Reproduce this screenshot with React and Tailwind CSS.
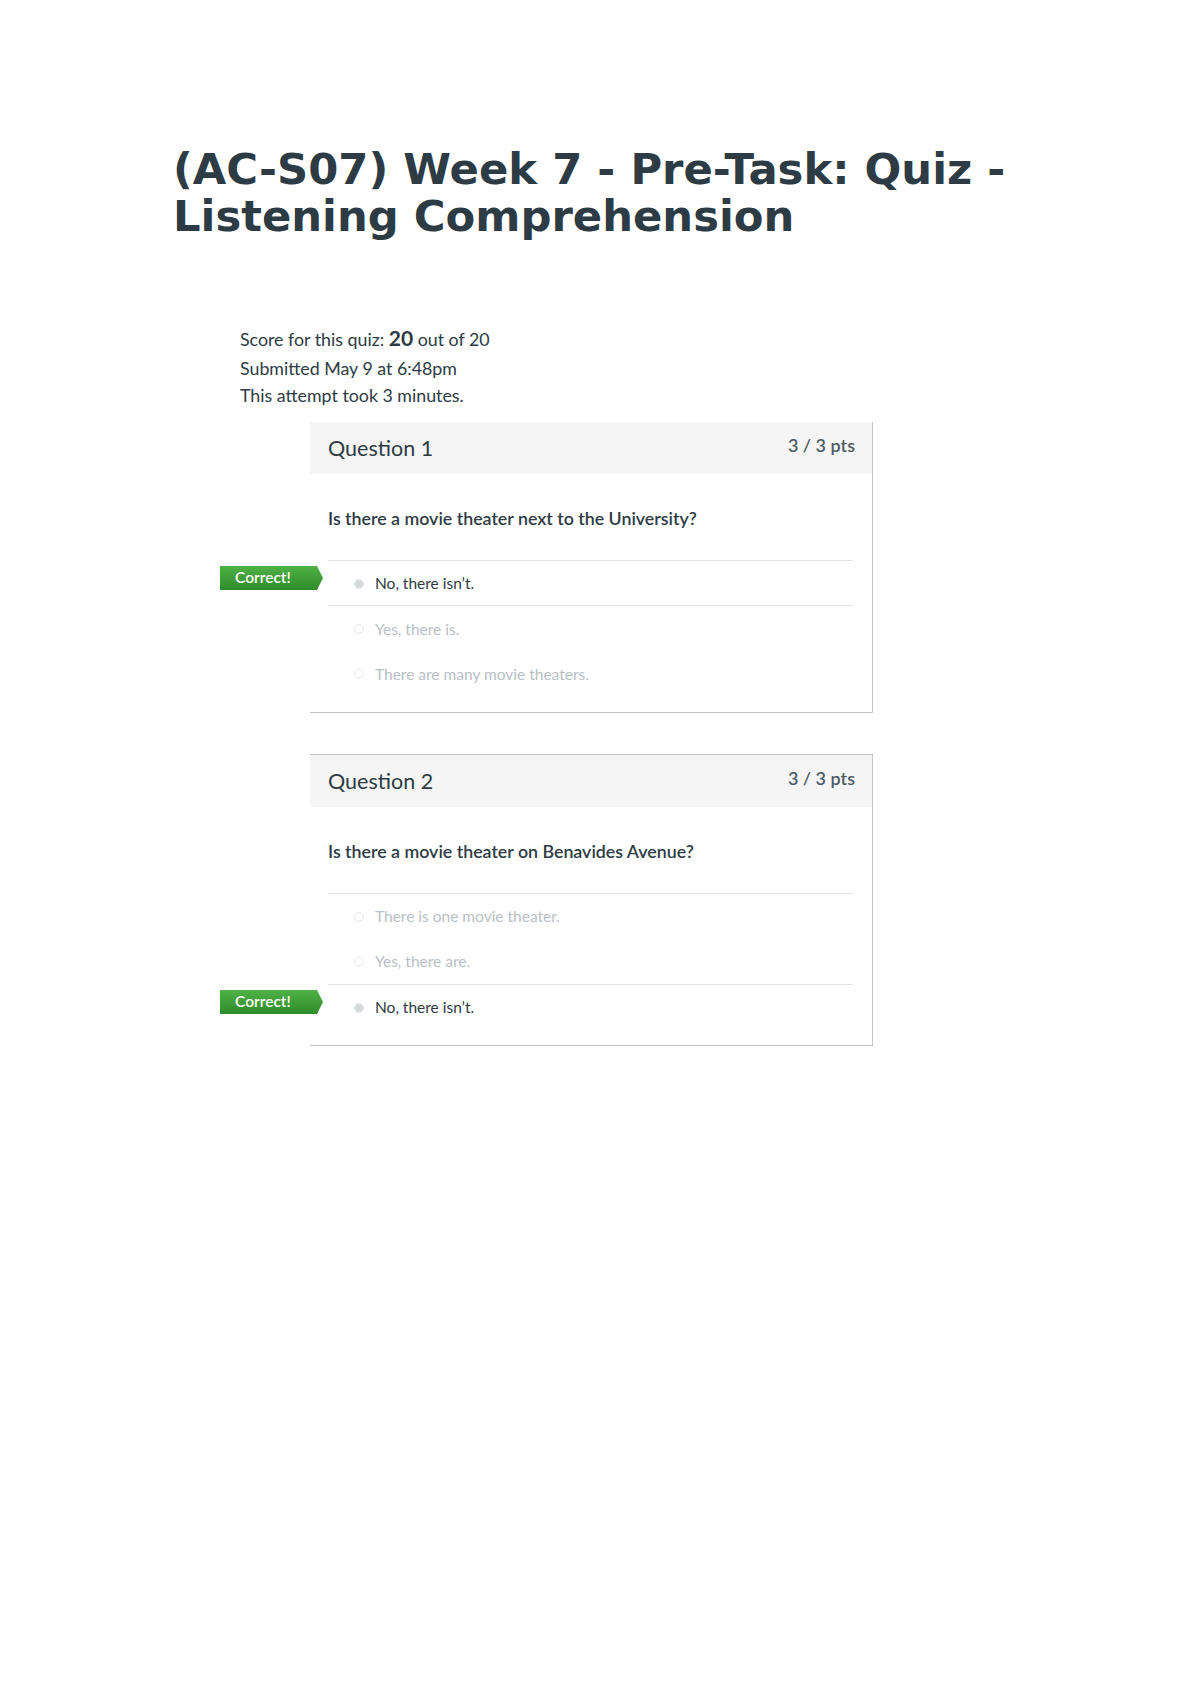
import React from 'react';

const questions = [
  {
    number: 1,
    text: 'Is there a movie theater next to the University?',
    answers: ['No, there isn’t.', 'Yes, there is.', 'There are many movie theaters.'],
    correct: 0,
    topBorder: false,
  },
  {
    number: 2,
    text: 'Is there a movie theater on Benavides Avenue?',
    answers: ['There is one movie theater.', 'Yes, there are.', 'No, there isn’t.'],
    correct: 2,
    topBorder: true,
  },
];

const CorrectBadge = () => (
  <div className="absolute left-[-108px] top-[5px] flex items-center h-[24px]">
    <div className="h-full w-[95px] bg-gradient-to-b from-[#4fb246] to-[#2e8b2a] text-white text-[15.5px] font-semibold flex items-center pl-[15px] leading-none">
      Correct!
    </div>
    <svg width="8" height="24" viewBox="0 0 8 24" className="block">
      <defs>
        <linearGradient id="g" x1="0" y1="0" x2="0" y2="1">
          <stop offset="0" stopColor="#4fb246" />
          <stop offset="1" stopColor="#2e8b2a" />
        </linearGradient>
      </defs>
      <polygon points="0,0 2,0 8,12 2,24 0,24" fill="url(#g)" />
    </svg>
  </div>
);

const Answer = ({ label, selected, borderClass }) => (
  <div className={`relative flex items-center h-[45px] pl-[26px] pt-[2px] ${borderClass}`}>
    {selected && <CorrectBadge />}
    <span
      className={`h-[10px] w-[10px] rounded-full mr-[11px] ${
        selected ? 'bg-[#d6d9dc] border border-[#e6e8ea]' : 'border border-[#e6e8ea]'
      }`}
    ></span>
    <span className={`text-[15.5px] ${selected ? 'text-[#2d3b45]' : 'text-[#b9c0c6]'}`}>{label}</span>
  </div>
);

const QuestionCard = ({ q }) => (
  <div
    className={`w-[563px] bg-white border-r border-b border-[#c4c4c4] ${
      q.topBorder ? 'border-t' : ''
    }`}
  >
    <div className="h-[52px] bg-[#f5f5f5] flex justify-between pl-[18px] pr-[17px]">
      <h3 className="text-[21.5px] text-[#2d3b45] leading-none pt-[16px]">Question {q.number}</h3>
      <span className="text-[18px] font-semibold text-[#4d5b66] leading-none pt-[14px]">3 / 3 pts</span>
    </div>
    <div className="px-[18px] pb-[16px]">
      <p className="text-[17.8px] font-semibold text-[#2d3b45] leading-none pt-[36px] pb-[32px]">{q.text}</p>
      <div className="border-t border-[#e3e3e3] mr-[1px]">
        {q.answers.map((a, i) => {
          const selected = i === q.correct;
          let borderClass = '';
          if (selected && i === 0) borderClass = 'border-b border-[#e3e3e3]';
          if (selected && i > 0) borderClass = 'border-t border-[#e3e3e3]';
          return <Answer key={i} label={a} selected={selected} borderClass={borderClass} />;
        })}
      </div>
    </div>
  </div>
);

export default function App() {
  return (
    <div className="min-h-[1698px] w-[1200px] bg-white">
      <h1
        className="pl-[173px] pt-[146px] text-[43.3px] leading-[47px] font-bold text-[#2d3b45]"
        style={{ fontFamily: '"DejaVu Sans", sans-serif' }}
      >
        (AC-S07) Week 7 - Pre-Task: Quiz -
        <br />
        Listening Comprehension
      </h1>

      <div className="pl-[240px]" style={{ fontFamily: 'Lato, "Open Sans", sans-serif' }}>
        <div className="mt-[82px] text-[17.8px] leading-[27px] text-[#2d3b45]">
          <div className="h-[33px] leading-[32px]">
            Score for this quiz: <span className="text-[21px] font-bold">20</span> out of 20
          </div>
          <div>Submitted May 9 at 6:48pm</div>
          <div>This attempt took 3 minutes.</div>
        </div>

        <div className="ml-[70px] mt-[13px] flex flex-col gap-[41px]">
          {questions.map((q) => (
            <QuestionCard key={q.number} q={q} />
          ))}
        </div>
      </div>
    </div>
  );
}
